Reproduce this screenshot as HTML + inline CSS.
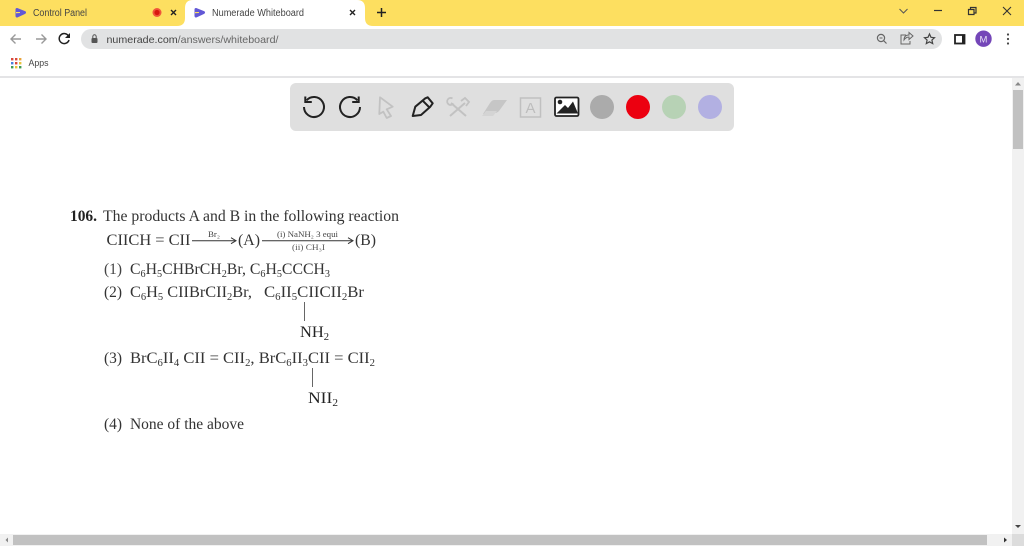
<!DOCTYPE html>
<html><head><meta charset="utf-8">
<style>
html,body{margin:0;padding:0;background:#fff;width:1024px;height:546px;overflow:hidden}
svg{display:block}
.ui{font-family:"Liberation Sans",sans-serif;fill:#444}
.s{font-family:"Liberation Serif",serif;fill:#2a2a2a}
</style></head><body>
<svg width="1024" height="546" viewBox="0 0 1024 546" xmlns="http://www.w3.org/2000/svg">
<!-- tab strip -->
<rect width="1024" height="26" fill="#fddf60"/>
<path d="M177 26q8 0 8-8V8q0-8 8-8h164q8 0 8 8v10q0 8 8 8z" fill="#fff"/>
<rect y="76" width="1024" height="2" fill="#e4e4e6"/>
<!-- favicons -->
<g fill="#6258d6" stroke="#6258d6">
<path d="M17 9.500L24.500 12.500 17 16z" stroke-width="3" stroke-linejoin="round"/>
<path d="M196 9.500L203.500 12.500 196 16z" stroke-width="3" stroke-linejoin="round"/>
</g>
<path d="M16 12.700l4-.2-4 0M195 12.700l4-.2-4 0" stroke="#fddf60" stroke-width="1"/>
<text class="ui" x="33" y="16" font-size="10" textLength="54" lengthAdjust="spacingAndGlyphs" fill="#444">Control Panel</text>
<text class="ui" x="212" y="16" font-size="10" textLength="92" lengthAdjust="spacingAndGlyphs">Numerade Whiteboard</text>
<circle cx="157" cy="12.500" r="4.500" fill="#f0553a"/><circle cx="157" cy="12.500" r="2.600" fill="#d8170f"/>
<path d="M171 10l5 5M176 10l-5 5M350 10l5 5M355 10l-5 5" stroke="#222" stroke-width="1.400" fill="none"/>
<path d="M381.500 8v9M377 12.500h9" stroke="#222" stroke-width="1.500" fill="none"/>
<!-- window controls -->
<path d="M899.500 9l4 4 4-4" stroke="#555" fill="none" stroke-width="1"/>
<path d="M934 10.500h8" stroke="#333" stroke-width="1.200"/>
<path d="M968.500 9.500h5.500v5h-5.500zM970.500 9.500V7.500h5.500V13h-2" stroke="#333" fill="none" stroke-width="1.200"/>
<path d="M1003 7l8 8M1011 7l-8 8" stroke="#333" stroke-width="1.100"/>
<!-- nav -->
<path d="M21 39h-10M15.500 34.500L11 39l4.500 4.500" stroke="#999" stroke-width="1.400" fill="none"/>
<path d="M36 39h10M41.500 34.500L46 39l-4.500 4.500" stroke="#999" stroke-width="1.400" fill="none"/>
<path d="M68.500 36a5 5 0 1 0 .5 4" stroke="#222" stroke-width="1.500" fill="none"/><path d="M70 33v5h-5z" fill="#222"/>
<rect x="81" y="29" width="861" height="20" rx="10" fill="#e1e2e3"/>
<rect x="91.500" y="38" width="6" height="5" rx="1" fill="#555"/><path d="M92.800 38v-1.500a1.700 1.700 0 0 1 3.400 0V38" stroke="#555" fill="none"/>
<text class="ui" x="106.500" y="43" font-size="10.500" textLength="172" lengthAdjust="spacingAndGlyphs" fill="#222">numerade.com<tspan fill="#666">/answers/whiteboard/</tspan></text>
<circle cx="881" cy="38" r="3.600" stroke="#666" fill="none" stroke-width="1.200"/><path d="M883.500 40.500l3 3" stroke="#666" stroke-width="1.200"/><path d="M879.500 38h3" stroke="#666"/>
<path d="M906 35h-5v9h9v-3M904 40q0-5 5-5v-2.500l4 3.500-4 3.500V37q-3 0-5 3z" stroke="#666" fill="none" stroke-width="1"/>
<path d="M929.500 34l1.500 3.300 3.500.4-2.600 2.400.8 3.500-3.200-1.800-3.200 1.800.8-3.500-2.600-2.400 3.500-.4z" stroke="#444" fill="none" stroke-width="1.200"/>
<rect x="955" y="35" width="9.500" height="8.500" fill="#fff" stroke="#222" stroke-width="1.800"/><rect x="962" y="34.500" width="3" height="9.500" fill="#222"/>
<circle cx="983.500" cy="38.700" r="8.200" fill="#7446b8"/>
<text x="983.500" y="42.300" text-anchor="middle" font-family="Liberation Sans" font-size="9.500" fill="#e8e0f5">M</text>
<g fill="#444"><circle cx="1008" cy="34.500" r="1.100"/><circle cx="1008" cy="39" r="1.100"/><circle cx="1008" cy="43.500" r="1.100"/></g>
<!-- apps -->
<g><rect x="11" y="58" width="2.400" height="2.400" fill="#d9483b"/><rect x="15" y="58" width="2.400" height="2.400" fill="#d9483b"/><rect x="19" y="58" width="2.400" height="2.400" fill="#e8a33a"/>
<rect x="11" y="62" width="2.400" height="2.400" fill="#4a7fe0"/><rect x="15" y="62" width="2.400" height="2.400" fill="#d9483b"/><rect x="19" y="62" width="2.400" height="2.400" fill="#e8c33a"/>
<rect x="11" y="66" width="2.400" height="2.400" fill="#3f9a55"/><rect x="15" y="66" width="2.400" height="2.400" fill="#e8c33a"/><rect x="19" y="66" width="2.400" height="2.400" fill="#3f9a55"/></g>
<text class="ui" x="28.500" y="66" font-size="9.500" textLength="20" lengthAdjust="spacingAndGlyphs" fill="#444">Apps</text>
<!-- toolbar -->
<rect x="290" y="83" width="444" height="48" rx="6" fill="#dfdfdf"/>
<g fill="none" stroke="#222" stroke-width="2">
<path d="M306.500 100.400A10 10 0 1 1 304 107"/><path d="M305.300 96.500v5.500h6.500"/>
<path d="M357.500 100.400A10 10 0 1 0 360 107"/><path d="M358.700 96.500v5.500h-6.500"/>
</g>
<path d="M380 97.300L392.700 106.700 386.700 109.300 391 116 386.700 118 383.300 111.700 379.300 114z" fill="none" stroke="#c2c2c2" stroke-width="1.800" stroke-linejoin="round"/>
<path d="M412.700 116L415.300 106.700 425.300 98.300 427.700 97.300 432.700 103.300 430.300 106.700 421 115zM422.700 100.700L430 108" fill="none" stroke="#222" stroke-width="2" stroke-linejoin="round"/>
<path d="M451 103l15 13M465 103l-15 13" fill="none" stroke="#c2c2c2" stroke-width="2"/>
<path d="M452.500 98.500a3.500 3.500 0 1 0 1 5M461 101l4-3 4 4-3 4" fill="none" stroke="#c2c2c2" stroke-width="1.800"/>
<path d="M483 114l7-11q2-3 4-3h13l-8 11q-2 2-4 2z" fill="#c6c6c6"/><path d="M482 116l4-5h11l-4 5z" fill="#d4d4d4"/>
<rect x="520.500" y="98" width="20" height="19" fill="none" stroke="#c0c0c0" stroke-width="1.500"/>
<text x="530.500" y="113" text-anchor="middle" font-family="Liberation Sans" font-size="15" fill="#bdbdbd">A</text>
<rect x="555" y="97.500" width="23.500" height="18.500" rx="1.500" fill="#fff" stroke="#222" stroke-width="1.800"/>
<circle cx="560" cy="102" r="2.300" fill="#222"/><path d="M556.500 113.500L565 105l3 3 5-6.500 5 12z" fill="#222"/>
<circle cx="602" cy="107" r="12" fill="#ababab"/>
<circle cx="638" cy="107" r="12" fill="#ec0010"/>
<circle cx="674" cy="107" r="12" fill="#b7d2b5"/>
<circle cx="710" cy="107" r="12" fill="#b2b0e2"/>
<!-- scrollbars -->
<rect x="1012" y="78" width="12" height="468" fill="#f1f1f1"/>
<path d="M1018 82l-3 3.500h6z" fill="#888"/>
<rect x="1013" y="90" width="10" height="59" fill="#c1c1c1"/>
<path d="M1015 525h6l-3 3z" fill="#444"/>
<rect y="534" width="1024" height="12" fill="#f1f1f1"/>
<rect x="1012" y="534" width="12" height="12" fill="#dcdcdc"/>
<rect x="13" y="535" width="974" height="10" fill="#c1c1c1"/>
<path d="M8 537.500v5l-2.500-2.500z" fill="#888"/>
<path d="M1004 537.500v5l3-2.500z" fill="#333"/>
<!-- question -->
<g class="s" stroke="none">
<text x="70" y="221" font-size="15.500" font-weight="bold" textLength="27" lengthAdjust="spacingAndGlyphs" fill="#222">106.</text>
<text x="103" y="221" font-size="15.500" textLength="296" lengthAdjust="spacingAndGlyphs" fill="#333">The products A and B in the following reaction</text>
<text x="106.500" y="245" font-size="15.500" textLength="84" lengthAdjust="spacingAndGlyphs" fill="#333">CIICH = CII</text>
<text x="208" y="237" font-size="8" textLength="12" lengthAdjust="spacingAndGlyphs" fill="#444">Br₂</text>
<path d="M192 240.700h43" stroke="#333" fill="none"/><path d="M231 237.700l5 3-5 3" stroke="#333" fill="none"/>
<text x="238" y="245" font-size="15.500" textLength="22" lengthAdjust="spacingAndGlyphs" fill="#333">(A)</text>
<text x="277" y="237" font-size="8" textLength="61" lengthAdjust="spacingAndGlyphs" fill="#444">(i) NaNH₂ 3 equi</text>
<text x="292" y="250" font-size="8" textLength="33" lengthAdjust="spacingAndGlyphs" fill="#555">(ii) CH₃I</text>
<path d="M262 240.700h90" stroke="#333" fill="none"/><path d="M348 237.700l5 3-5 3" stroke="#333" fill="none"/>
<text x="355" y="245" font-size="15.500" textLength="21" lengthAdjust="spacingAndGlyphs" fill="#333">(B)</text>
<text x="104" y="274" font-size="15.500" textLength="18" lengthAdjust="spacingAndGlyphs" fill="#444">(1)</text>
<text x="130" y="274" font-size="15.500" textLength="200" lengthAdjust="spacingAndGlyphs" fill="#333">C<tspan dy="3" font-size="10">6</tspan><tspan dy="-3">H</tspan><tspan dy="3" font-size="10">5</tspan><tspan dy="-3">CHBrCH</tspan><tspan dy="3" font-size="10">2</tspan><tspan dy="-3">Br, C</tspan><tspan dy="3" font-size="10">6</tspan><tspan dy="-3">H</tspan><tspan dy="3" font-size="10">5</tspan><tspan dy="-3">CCCH</tspan><tspan dy="3" font-size="10">3</tspan></text>
<text x="104" y="297" font-size="15.500" textLength="18" lengthAdjust="spacingAndGlyphs" fill="#333">(2)</text>
<text x="130" y="297" font-size="15.500" textLength="122" lengthAdjust="spacingAndGlyphs" fill="#333">C<tspan dy="3" font-size="10">6</tspan><tspan dy="-3">H</tspan><tspan dy="3" font-size="10">5</tspan><tspan dy="-3"> CIIBrCII</tspan><tspan dy="3" font-size="10">2</tspan><tspan dy="-3">Br,</tspan></text>
<text x="264" y="297" font-size="15.500" textLength="100" lengthAdjust="spacingAndGlyphs" fill="#333">C<tspan dy="3" font-size="10">6</tspan><tspan dy="-3">II</tspan><tspan dy="3" font-size="10">5</tspan><tspan dy="-3">CIICII</tspan><tspan dy="3" font-size="10">2</tspan><tspan dy="-3">Br</tspan></text>
<path d="M304.500 302v19" stroke="#666" fill="none"/>
<text x="300" y="337" font-size="15.500" textLength="29" lengthAdjust="spacingAndGlyphs" fill="#222">NH<tspan dy="3" font-size="10">2</tspan></text>
<text x="104" y="363" font-size="15.500" textLength="18" lengthAdjust="spacingAndGlyphs" fill="#333">(3)</text>
<text x="130" y="363" font-size="15.500" textLength="245" lengthAdjust="spacingAndGlyphs" fill="#333">BrC<tspan dy="3" font-size="10">6</tspan><tspan dy="-3">II</tspan><tspan dy="3" font-size="10">4</tspan><tspan dy="-3"> CII = CII</tspan><tspan dy="3" font-size="10">2</tspan><tspan dy="-3">, BrC</tspan><tspan dy="3" font-size="10">6</tspan><tspan dy="-3">II</tspan><tspan dy="3" font-size="10">3</tspan><tspan dy="-3">CII = CII</tspan><tspan dy="3" font-size="10">2</tspan></text>
<path d="M312.500 368v19" stroke="#666" fill="none"/>
<text x="308" y="403" font-size="15.500" textLength="30" lengthAdjust="spacingAndGlyphs" fill="#222">NII<tspan dy="3" font-size="10">2</tspan></text>
<text x="104" y="429" font-size="15.500" textLength="18" lengthAdjust="spacingAndGlyphs" fill="#333">(4)</text>
<text x="130" y="429" font-size="15.500" textLength="114" lengthAdjust="spacingAndGlyphs" fill="#333">None of the above</text>
</g>
</svg>
</body></html>
